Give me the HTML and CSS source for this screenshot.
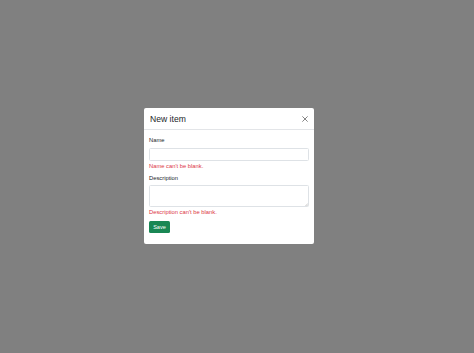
FILE: index.html
```html
<!DOCTYPE html>
<html lang="en">
<head>
<meta charset="utf-8">
<title>New item</title>
<link rel="stylesheet" href="styles.css">
</head>
<body>
<div class="backdrop">
  <div class="modal">
    <div class="modal-header">
      <h5 class="modal-title">New item</h5>
      <button class="btn-close" aria-label="Close">
        <svg viewBox="0 0 16 16" width="6" height="6"><path d="M1 1L15 15M15 1L1 15" stroke="#777" stroke-width="2.4" fill="none"/></svg>
      </button>
    </div>
    <form class="modal-body">
      <div class="field">
        <label class="form-label">Name</label>
        <input class="form-control" type="text">
        <div class="invalid-feedback">Name can't be blank.</div>
      </div>
      <div class="field">
        <label class="form-label">Description</label>
        <div class="textarea-wrap">
          <textarea class="form-control textarea"></textarea>
          <svg class="grip" viewBox="0 0 4 4" width="3" height="3"><path d="M0.5 4L4 0.5M2.2 4L4 2.2" stroke="#999" stroke-width="0.6" fill="none"/></svg>
        </div>
        <div class="invalid-feedback">Description can't be blank.</div>
      </div>
      <div class="actions">
        <button type="button" class="btn-save">Save</button>
      </div>
    </form>
  </div>
</div>
</body>
</html>
```
FILE: styles.css
```css
* { box-sizing: border-box; }
html, body { margin: 0; padding: 0; }
body {
  width: 474px;
  height: 353px;
  font-family: "Liberation Sans", Arial, sans-serif;
  color: #212529;
  overflow: hidden;
}
.backdrop {
  width: 474px;
  height: 353px;
  background: #808080;
  display: flex;
  justify-content: flex-start;
  align-items: flex-start;
  padding-top: 108px;
  padding-left: 144px;
}
.modal {
  width: 170px;
  height: 136px;
  background: #fff;
  border-radius: 2px;
  display: flex;
  flex-direction: column;
}
.modal-header {
  height: 22px;
  border-bottom: 1px solid #e3e5e8;
  display: flex;
  align-items: center;
  justify-content: space-between;
  padding: 0 5px 0 6px;
}
.modal-title {
  margin: 0;
  font-size: 8.6px;
  font-weight: 400;
  line-height: 10px;
  color: #212529;
}
.btn-close {
  border: 0;
  background: transparent;
  padding: 0;
  width: 8px;
  height: 8px;
  display: flex;
  align-items: center;
  justify-content: center;
}
.modal-body {
  margin: 0;
  padding: 6px 5px 0 5px;
  display: flex;
  flex-direction: column;
}
.field {
  display: flex;
  flex-direction: column;
  margin-bottom: 4px;
}
.form-label {
  font-size: 5.8px;
  line-height: 9px;
  margin-bottom: 2.5px;
  color: #212529;
}
.form-control {
  display: block;
  width: 160px;
  height: 13px;
  border: 1px solid #dee2e6;
  border-radius: 1.5px;
  background: #fff;
  margin: 0;
  padding: 0;
}
.textarea-wrap {
  position: relative;
  width: 160px;
  height: 22px;
}
.textarea {
  height: 22px;
  resize: none;
  font: inherit;
}
.grip {
  position: absolute;
  right: 1px;
  bottom: 1px;
}
.invalid-feedback {
  font-size: 5.8px;
  line-height: 8px;
  margin-top: 1px;
  color: #dc3545;
}
.actions {
  margin-top: 1px;
}
.btn-save {
  width: 21px;
  height: 12px;
  border: 0;
  border-radius: 1.5px;
  background: #198754;
  color: #fff;
  font-family: "Liberation Sans", Arial, sans-serif;
  font-size: 5.6px;
  padding: 0;
  display: flex;
  align-items: center;
  justify-content: center;
}
```
